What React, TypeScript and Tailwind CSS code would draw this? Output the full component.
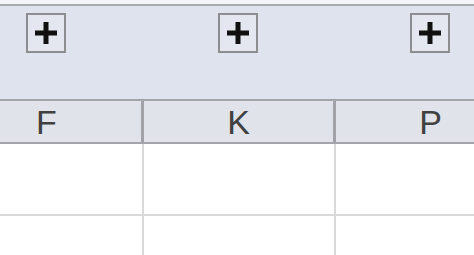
const columns = ['F', 'K', 'P'];

function PlusButton() {
  return (
    <div className="flex h-[40px] w-[40px] items-center justify-center border-2 border-[#8c8d91] bg-[#e4e7ef]">
      <svg width="22" height="22" viewBox="0 0 22 22">
        <rect x="0" y="8.5" width="22" height="5" fill="#111" />
        <rect x="8.5" y="0" width="5" height="22" fill="#111" />
      </svg>
    </div>
  );
}

export default function App() {
  return (
    <div className="h-[255px] w-[474px] overflow-hidden bg-white" style={{ fontFamily: '"Liberation Sans", Arial, sans-serif' }}>
      <div className="h-[4px] bg-[#f4f5f8]" />

      {/* outline group bar */}
      <div className="flex h-[95px] border-t-2 border-[#a7a9ae] bg-[#dfe3ee] ml-[-48px]">
        {columns.map((c) => (
          <div key={c} className="flex w-[192px] shrink-0 justify-center pt-[7px] pr-[5px]">
            <PlusButton />
          </div>
        ))}
      </div>

      {/* column headers */}
      <div className="flex h-[45px] border-y-2 border-[#a3a5aa] bg-[#e0e3e9] ml-[-48px]">
        {columns.map((c) => (
          <div
            key={c}
            className="flex w-[192px] shrink-0 items-center justify-center border-r-[3px] border-[#a0a2a7] text-[34px] leading-none text-[#404040]"
          >
            {c}
          </div>
        ))}
      </div>

      {/* cells */}
      {[0, 1].map((r) => (
        <div key={r} className="flex h-[72px] border-b-2 border-[#dadada] ml-[-48px]">
          {columns.map((c) => (
            <div key={c} className="w-[192px] shrink-0 border-r-2 border-[#dadada]" />
          ))}
        </div>
      ))}
    </div>
  );
}
